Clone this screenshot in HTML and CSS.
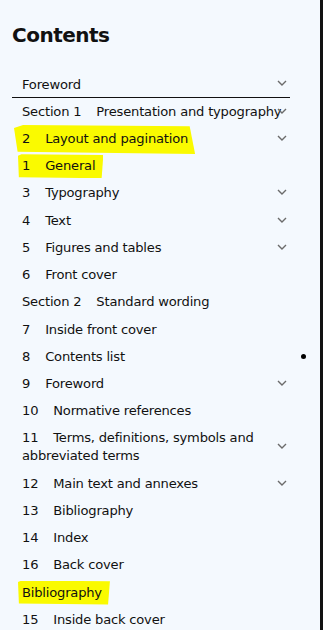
FILE: index.html
```html
<!DOCTYPE html>
<html>
<head>
    <title>Contents</title>
    <link rel="stylesheet" href="styles.css">
</head>
<body>
    <div class="sidebar">
        <h1>Contents</h1>

        <ul class="toc">
            <li class="item first">
                <span class="label">Foreword</span>
                <svg class="chev" viewBox="0 0 10 6"><path d="M1 1 L5 5 L9 1"/></svg>
            </li>
            <li class="item">
                <span class="label"><span class="num">Section 1</span>Presentation and typography</span>
                <svg class="chev" viewBox="0 0 10 6"><path d="M1 1 L5 5 L9 1"/></svg>
            </li>
            <li class="item">
                <span class="label mark big"><span class="num">2</span>Layout and pagination</span>
                <svg class="chev" viewBox="0 0 10 6"><path d="M1 1 L5 5 L9 1"/></svg>
            </li>
            <li class="item">
                <span class="label mark"><span class="num">1</span>General</span>
            </li>
            <li class="item">
                <span class="label"><span class="num">3</span>Typography</span>
                <svg class="chev" viewBox="0 0 10 6"><path d="M1 1 L5 5 L9 1"/></svg>
            </li>
            <li class="item">
                <span class="label"><span class="num">4</span>Text</span>
                <svg class="chev" viewBox="0 0 10 6"><path d="M1 1 L5 5 L9 1"/></svg>
            </li>
            <li class="item">
                <span class="label"><span class="num">5</span>Figures and tables</span>
                <svg class="chev" viewBox="0 0 10 6"><path d="M1 1 L5 5 L9 1"/></svg>
            </li>
            <li class="item">
                <span class="label"><span class="num">6</span>Front cover</span>
            </li>
            <li class="item">
                <span class="label"><span class="num">Section 2</span>Standard wording</span>
            </li>
            <li class="item">
                <span class="label"><span class="num">7</span>Inside front cover</span>
            </li>
            <li class="item">
                <span class="label"><span class="num">8</span>Contents list</span>
                <span class="dot"></span>
            </li>
            <li class="item">
                <span class="label"><span class="num">9</span>Foreword</span>
                <svg class="chev" viewBox="0 0 10 6"><path d="M1 1 L5 5 L9 1"/></svg>
            </li>
            <li class="item">
                <span class="label"><span class="num">10</span>Normative references</span>
            </li>
            <li class="item">
                <div class="label">
                    <div><span class="num">11</span><span>Terms, definitions, symbols and</span></div>
                    <div>abbreviated terms</div>
                </div>
                <svg class="chev" viewBox="0 0 10 6"><path d="M1 1 L5 5 L9 1"/></svg>
            </li>
            <li class="item">
                <span class="label"><span class="num">12</span>Main text and annexes</span>
                <svg class="chev" viewBox="0 0 10 6"><path d="M1 1 L5 5 L9 1"/></svg>
            </li>
            <li class="item">
                <span class="label"><span class="num">13</span>Bibliography</span>
            </li>
            <li class="item">
                <span class="label"><span class="num">14</span>Index</span>
            </li>
            <li class="item">
                <span class="label"><span class="num">16</span>Back cover</span>
            </li>
            <li class="item">
                <span class="label mark">Bibliography</span>
            </li>
            <li class="item">
                <span class="label"><span class="num">15</span>Inside back cover</span>
            </li>
        </ul>
    </div>
</body>
</html>
```

FILE: styles.css
```css
body {
    margin: 0;
    padding: 0;
    background-color: #f4f9fe;
    font-family: "DejaVu Sans", Verdana, sans-serif;
    color: #111111;
}

.sidebar {
    min-height: 630px;
    box-sizing: border-box;
    width: 323px;
    padding: 23px 0 0 12px;
    border-right: 3px solid #111111;
    overflow: hidden;
}

h1 {
    margin: 0;
    font-size: 20px;
    line-height: 24px;
    letter-spacing: -0.5px;
    font-weight: bold;
}

.toc {
    list-style: none;
    margin: 24px 0 0 0;
    padding: 0;
    width: 278px;
}

.item {
    position: relative;
    display: flex;
    align-items: center;
    padding: 4.62px 0 4.62px 10px;
    font-size: 13.1px;
    line-height: 18px;
    letter-spacing: -0.2px;
}

.item.first {
    padding-bottom: 3.62px;
    border-bottom: 1px solid #111111;
}

.label {
    white-space: nowrap;
}

.num {
    margin-right: 15px;
}

.mark {
    display: inline-block;
    background-color: #fafa00;
    padding: 3px 8px 3px 4px;
    margin: -3px -8px -3px -4px;
    clip-path: polygon(0 6%, 4% 0, 100% 3%, 98% 100%, 1% 96%);
}

.mark.big {
    padding: 5px 7px 6px 8px;
    margin: -5px -7px -6px -8px;
    clip-path: polygon(0 10%, 5% 0, 97% 4%, 100% 100%, 2% 92%);
}

.chev {
    position: absolute;
    right: 3px;
    top: 50%;
    width: 10px;
    height: 6px;
    margin-top: -4px;
}

.chev path {
    fill: none;
    stroke: #6b6b6b;
    stroke-width: 1.4;
}

.dot {
    position: absolute;
    right: -16px;
    top: 50%;
    width: 5px;
    height: 5px;
    margin-top: -3px;
    border-radius: 50%;
    background-color: #000000;
}
```
